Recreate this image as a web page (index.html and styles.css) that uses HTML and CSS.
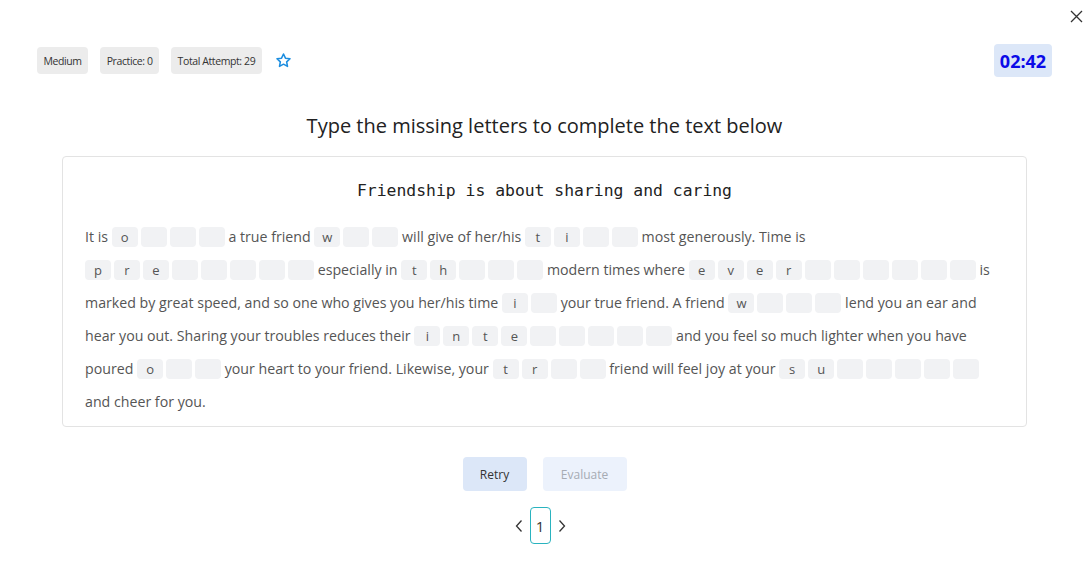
FILE: index.html
```html
<!DOCTYPE html>
<html lang="en">
<head>
<meta charset="utf-8">
<title>Missing letters</title>
<link rel="stylesheet" href="styles.css">
</head>
<body>
<div class="page">
  <button class="close" aria-label="Close">
    <svg width="13" height="13" viewBox="0 0 13 13"><path d="M1 1L12 12M12 1L1 12" stroke="#333" stroke-width="1.3" fill="none"/></svg>
  </button>
  <header class="topbar">
    <div class="badges">
      <span class="badge">Medium</span>
      <span class="badge">Practice: 0</span>
      <span class="badge">Total Attempt: 29</span>
      <svg class="star" width="17" height="17" viewBox="0 0 24 24"><path d="M12 2.8l2.75 5.9 6.45.8-4.75 4.45 1.2 6.4L12 17.2l-5.650 3.15 1.2-6.4L2.8 9.5l6.45-.8z" fill="none" stroke="#1d8ee0" stroke-width="2.2" stroke-linejoin="round"/></svg>
    </div>
    <div class="timer">02:42</div>
  </header>

  <h1 class="heading">Type the missing letters to complete the text below</h1>

  <section class="card">
    <h2 class="card-title">Friendship is about sharing and caring</h2>
    <p class="passage">
      It is <span class="cells"><span class="cell">o</span><span class="cell"></span><span class="cell"></span><span class="cell"></span></span> a true friend <span class="cells"><span class="cell">w</span><span class="cell"></span><span class="cell"></span></span> will give of her/his <span class="cells"><span class="cell">t</span><span class="cell">i</span><span class="cell"></span><span class="cell"></span></span> most generously. Time is<br>
      <span class="cells"><span class="cell">p</span><span class="cell">r</span><span class="cell">e</span><span class="cell"></span><span class="cell"></span><span class="cell"></span><span class="cell"></span><span class="cell"></span></span> especially in <span class="cells"><span class="cell">t</span><span class="cell">h</span><span class="cell"></span><span class="cell"></span><span class="cell"></span></span> modern times where <span class="cells"><span class="cell">e</span><span class="cell">v</span><span class="cell">e</span><span class="cell">r</span><span class="cell"></span><span class="cell"></span><span class="cell"></span><span class="cell"></span><span class="cell"></span><span class="cell"></span></span> is<br>
      marked by great speed, and so one who gives you her/his time <span class="cells"><span class="cell">i</span><span class="cell"></span></span> your true friend. A friend <span class="cells"><span class="cell">w</span><span class="cell"></span><span class="cell"></span><span class="cell"></span></span> lend you an ear and<br>
      hear you out. Sharing your troubles reduces their <span class="cells"><span class="cell">i</span><span class="cell">n</span><span class="cell">t</span><span class="cell">e</span><span class="cell"></span><span class="cell"></span><span class="cell"></span><span class="cell"></span><span class="cell"></span></span> and you feel so much lighter when you have<br>
      poured <span class="cells"><span class="cell">o</span><span class="cell"></span><span class="cell"></span></span> your heart to your friend. Likewise, your <span class="cells"><span class="cell">t</span><span class="cell">r</span><span class="cell"></span><span class="cell"></span></span> friend will feel joy at your <span class="cells"><span class="cell">s</span><span class="cell">u</span><span class="cell"></span><span class="cell"></span><span class="cell"></span><span class="cell"></span><span class="cell"></span></span><br>
      and cheer for you.
    </p>
  </section>

  <div class="actions">
    <button class="btn btn-retry">Retry</button>
    <button class="btn btn-eval" disabled>Evaluate</button>
  </div>

  <nav class="pager">
    <svg width="10" height="14" viewBox="0 0 10 14"><path d="M7.5 1.5L2.5 7l5 5.5" fill="none" stroke="#333" stroke-width="1.3"/></svg>
    <span class="page-num">1</span>
    <svg width="10" height="14" viewBox="0 0 10 14"><path d="M2.5 1.5L7.5 7l-5 5.5" fill="none" stroke="#333" stroke-width="1.3"/></svg>
  </nav>
</div>
</body>
</html>
```

FILE: styles.css
```css
* { box-sizing: border-box; }
html, body { margin: 0; padding: 0; background: #fff; }
body { font-family: "Open Sans", "Noto Sans", sans-serif; color: #333; }

.page { position: relative; width: 1089px; min-height: 573px; }

.close {
  position: absolute; top: 8px; right: 4px;
  width: 17px; height: 17px; padding: 2px;
  border: 0; background: transparent; cursor: pointer;
  display: flex; align-items: center; justify-content: center;
}

.topbar {
  display: flex; justify-content: space-between; align-items: center;
  padding: 44px 37px 0 37px;
}
.badges { display: flex; align-items: center; gap: 12px; }
.badge {
  display: inline-flex; align-items: center;
  height: 27px; padding: 0 6.5px;
  background: #ececec; border-radius: 4px;
  font-size: 10.5px; color: #333;
  letter-spacing: -0.4px;
}
.star { margin-left: 1px; }
.timer {
  width: 58px; height: 33px;
  display: flex; align-items: center; justify-content: center;
  background: #dce7f8; border-radius: 4px;
  color: #0b0be8; font-weight: 700; font-size: 18px;
  font-family: "Open Sans", sans-serif;
}

.heading {
  margin: 34px 0 0; text-align: center;
  font-size: 20px; font-weight: 500; color: #222;
  line-height: 30px;
}

.card {
  margin: 15px 62px 0;
  border: 1px solid #e3e3e3; border-radius: 4px;
  padding: 19px 22px 8px;
}
.card-title {
  margin: 0 0 14px; text-align: center;
  font-family: "DejaVu Sans Mono", monospace;
  font-size: 16.4px; font-weight: 400; color: #222;
  line-height: 30px;
}
.passage {
  margin: 0;
  font-family: "Open Sans", sans-serif;
  font-size: 14.2px; color: #555;
  line-height: 33px;
}
.cells { display: inline-flex; gap: 3px; vertical-align: middle; margin-top: -2px; }
.cell {
  width: 26px; height: 20px;
  display: inline-flex; align-items: center; justify-content: center;
  background: #f1f2f4; border-radius: 4px;
  font-size: 13px; color: #555; line-height: 1;
}

.actions {
  display: flex; justify-content: center; gap: 16px;
  margin-top: 30px;
}
.btn {
  height: 34px; border: 0; border-radius: 4px;
  font-family: "Open Sans", sans-serif; font-size: 12px;
  padding: 0;
}
.btn-retry { width: 64px; background: #dce7f8; color: #333; }
.btn-eval { width: 84px; background: #ecf2fc; color: #a6abb3; }

.pager {
  display: flex; justify-content: center; align-items: center;
  gap: 6px; margin-top: 16px; padding-right: 9px;
}
.page-num {
  width: 21px; height: 37px;
  display: flex; align-items: center; justify-content: center;
  border: 1px solid #2ab3bf; border-radius: 4px;
  font-size: 15px; color: #333;
}
```
